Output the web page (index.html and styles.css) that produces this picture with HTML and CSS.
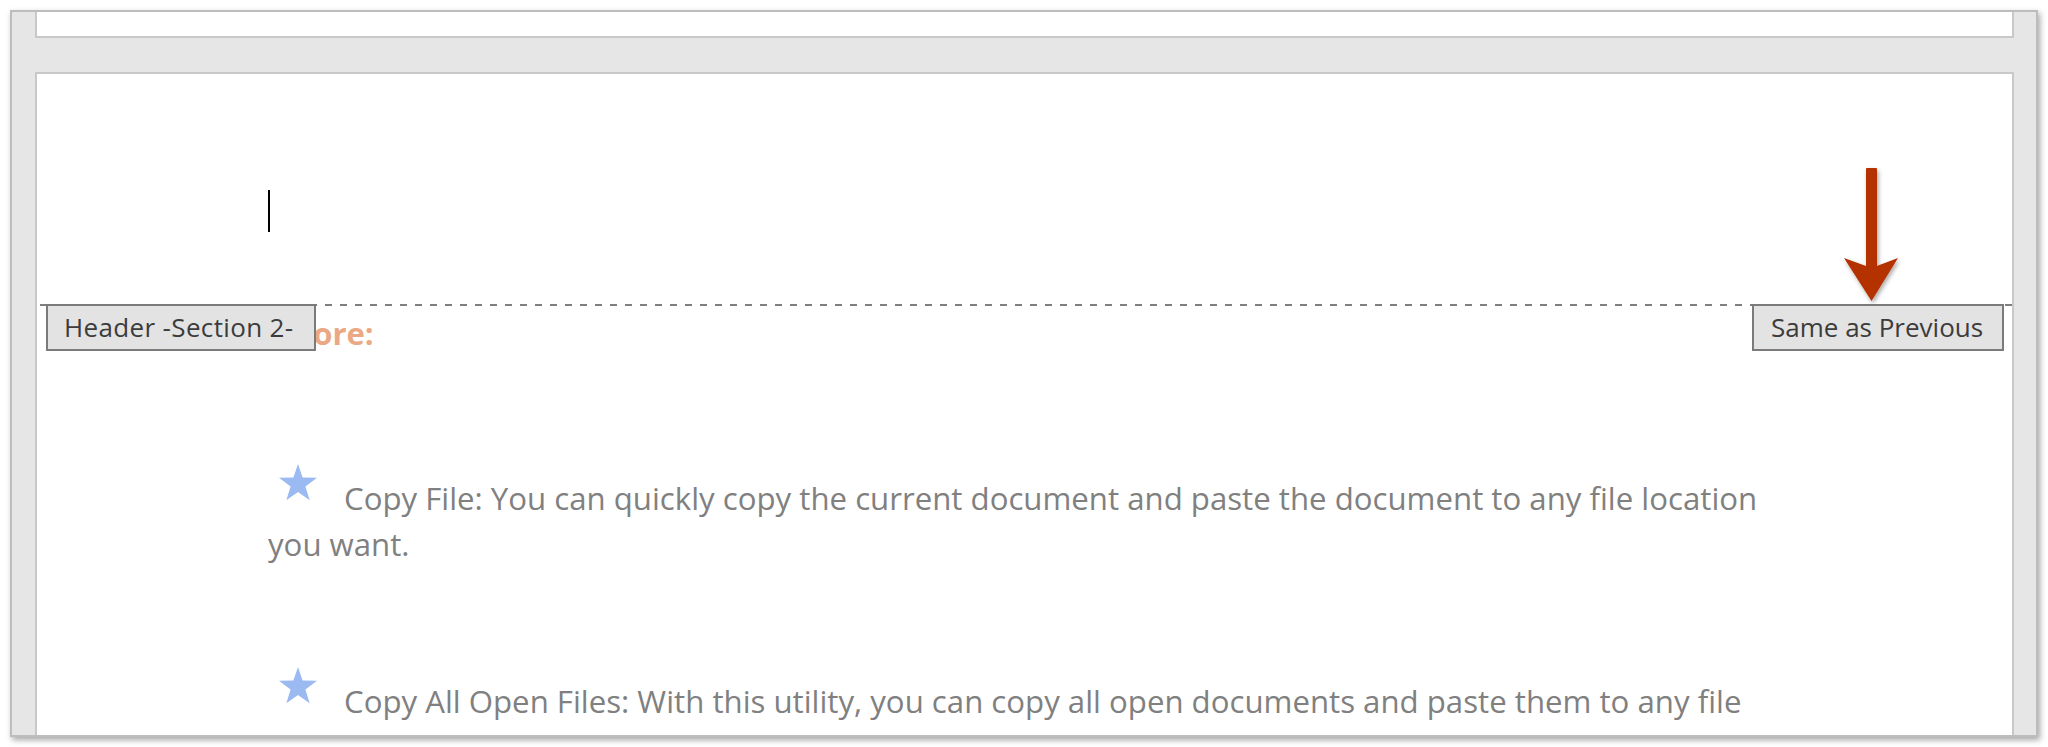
FILE: index.html
```html
<!DOCTYPE html>
<html lang="en">
<head>
<meta charset="utf-8">
<title>Header - Same as Previous</title>
<link rel="stylesheet" href="styles.css">
</head>
<body>
<div class="shot">
  <div class="prev-page"></div>
  <div class="page">
    <div class="header-area">
      <span class="cursor"></span>
    </div>
    <div class="header-rule"></div>
    <span class="tag tag-left">Header -Section 2-</span>
    <span class="tag tag-right">Same as Previous</span>
    <svg class="arrow" width="62" height="140" viewBox="0 0 62 140">
      <defs>
        <filter id="sh" x="-30%" y="-10%" width="160%" height="130%">
          <feDropShadow dx="1.5" dy="2.5" stdDeviation="2" flood-color="#000" flood-opacity="0.35"/>
        </filter>
      </defs>
      <g filter="url(#sh)" fill="#b33000">
        <rect x="26" y="3" width="11" height="104" rx="1"/>
        <path d="M4 93 L31.5 136 L58 93 L31.5 103 Z"/>
      </g>
    </svg>
    <div class="body">
      <h2 class="heading">More:</h2>
      <p class="item"><svg class="star" width="40" height="40" viewBox="0 0 40 40"><path d="M20 1 L24.6 14.6 L39 14.8 L27.4 23.4 L31.7 37.2 L20 28.9 L8.3 37.2 L12.6 23.4 L1 14.8 L15.4 14.6 Z" fill="#9bbaf2"/></svg>Copy File: You can quickly copy the current document and paste the document to any file location you want.</p>
      <p class="item"><svg class="star" width="40" height="40" viewBox="0 0 40 40"><path d="M20 1 L24.6 14.6 L39 14.8 L27.4 23.4 L31.7 37.2 L20 28.9 L8.3 37.2 L12.6 23.4 L1 14.8 L15.4 14.6 Z" fill="#9bbaf2"/></svg>Copy All Open Files: With this utility, you can copy all open documents and paste them to any file location you want.</p>
    </div>
  </div>
</div>
</body>
</html>
```
FILE: styles.css
```css
html, body {
  margin: 0;
  padding: 0;
  background: #ffffff;
}

body {
  width: 2048px;
  height: 747px;
  overflow: hidden;
}

.shot {
  box-sizing: border-box;
  margin: 10px 0 0 10px;
  width: 2028px;
  height: 727px;
  border: 2px solid #bdbdbd;
  background: #e6e6e6;
  box-shadow: 2px 3px 6px rgba(0, 0, 0, 0.35);
  padding: 0 22px 0 23px;
  display: flex;
  flex-direction: column;
  overflow: hidden;
}

.prev-page {
  flex: none;
  height: 24px;
  background: #ffffff;
  border: 2px solid #c8c8c8;
  border-top: none;
}

.page {
  flex: 1;
  margin-top: 34px;
  position: relative;
  background: #ffffff;
  border: 2px solid #c8c8c8;
  border-bottom: none;
}

.header-area {
  box-sizing: border-box;
  height: 230px;
  padding: 116px 0 0 231px;
}

.cursor {
  display: block;
  width: 2px;
  height: 42px;
  background: #000000;
}

.header-rule {
  height: 2px;
  background-image: repeating-linear-gradient(to right, #7f7f7f 0 7px, transparent 7px 15px);
  background-position: 3px 0;
}

.tag {
  position: absolute;
  top: 230px;
  box-sizing: border-box;
  height: 47px;
  padding-left: 16px;
  border: 2px solid #7b7b7b;
  background: #e3e3e3;
  color: #3c3c3c;
  font-family: "Open Sans", "Noto Sans", sans-serif;
  font-size: 26px;
  line-height: 43px;
  white-space: nowrap;
  z-index: 2;
}

.tag-left {
  left: 9px;
  width: 270px;
  letter-spacing: 0.35px;
}

.tag-right {
  right: 8px;
  width: 252px;
  padding-left: 17px;
}

.arrow {
  position: absolute;
  left: 1803px;
  top: 91px;
  z-index: 3;
}

.body {
  padding: 0 222px 0 231px;
  font-family: "Open Sans", "Noto Sans", sans-serif;
  font-variant-ligatures: none;
}

.heading {
  margin: 7px 0 0 0;
  padding-left: 16px;
  font-family: "Open Sans", sans-serif;
  font-size: 31px;
  line-height: 40px;
  font-weight: 700;
  color: #eaa984;
}

.item {
  margin: 110px 0 0 0;
  font-size: 31.2px;
  line-height: 46px;
  color: #808080;
}

.item + .item {
  margin-top: 99px;
}

.star {
  vertical-align: 7px;
  margin-left: 10px;
  margin-right: 26px;
}
```
